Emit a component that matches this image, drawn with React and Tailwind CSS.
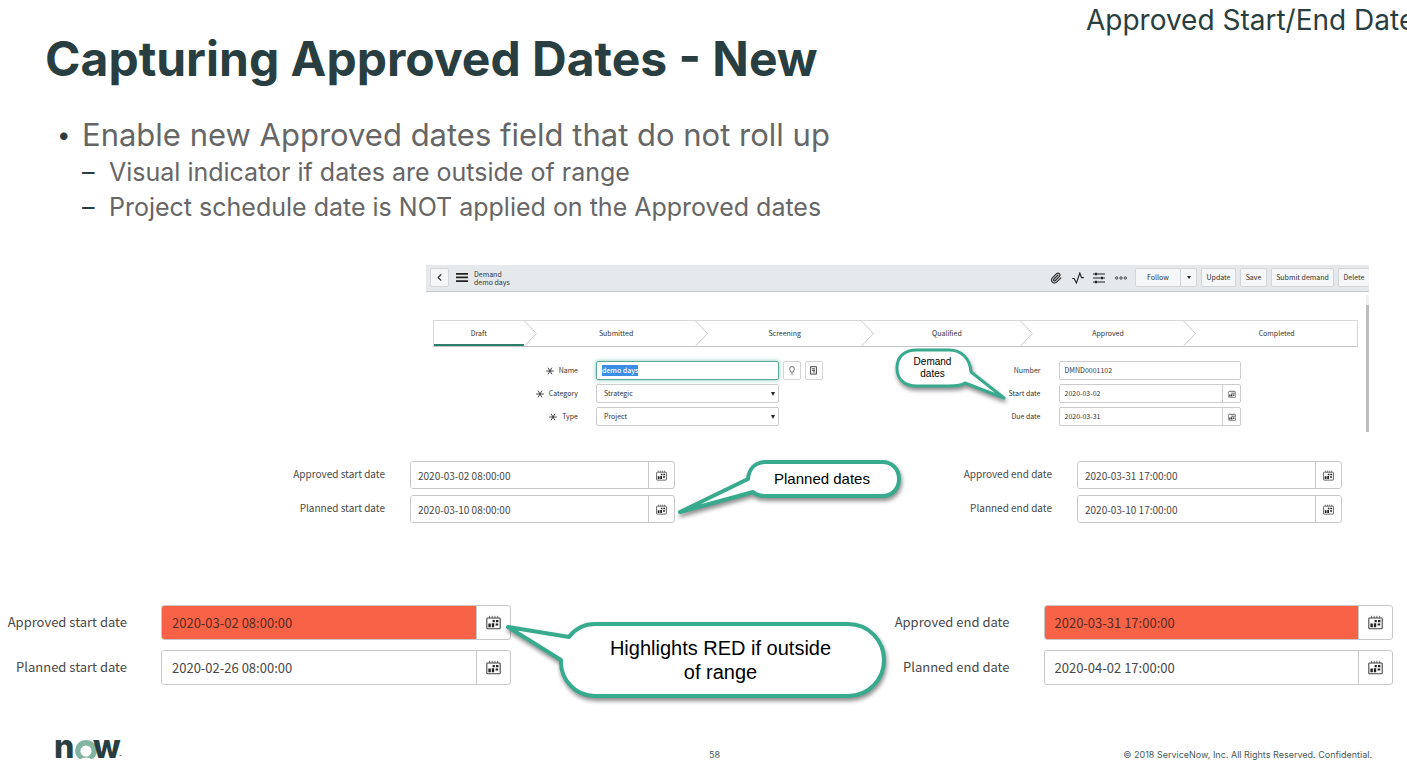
import React, { useEffect, useRef } from 'react';
import { ChevronLeft, Paperclip } from 'lucide-react';

const steps = [
  { name: 'Draft', grow: 'flex-[103]', active: true },
  { name: 'Submitted', grow: 'flex-[172]' },
  { name: 'Screening', grow: 'flex-[166]' },
  { name: 'Qualified', grow: 'flex-[159]' },
  { name: 'Approved', grow: 'flex-[164]' },
  { name: 'Completed', grow: 'flex-[161]' },
];

const CalendarIcon = ({ className }) => (
  <svg viewBox="0 0 15 15" className={className} fill="none" stroke="#444" aria-hidden="true">
    <rect x="0.8" y="3" width="13.4" height="10.8" rx="0.8" strokeWidth="1.1" />
    <path d="M3.5 0.8v2.4M6.2 0.8v2.4M8.9 0.8v2.4M11.6 0.8v2.4" strokeWidth="0.8" />
    <path
      d="M2.400 8.600h2.400v3.600H2.400zM5.800 8.200h2.400v4H5.800zM6.600 5h2.200v2.200H6.600zM10 5h2.400v2.200H10zM9.600 8.400h2.600v2.200H9.600z"
      fill="#222"
      stroke="none"
    />
  </svg>
);

// Speech bubble, the tail is part of the outline
const Callout = ({ path, viewBox, stroke, className, textClass, children }) => (
  <div className={`absolute z-10 ${className}`}>
    <svg viewBox={viewBox} className="absolute inset-0 w-full h-full overflow-visible" aria-hidden="true">
      <path
        d={path}
        fill="#fff"
        stroke="#38ab8e"
        strokeWidth={stroke}
        strokeLinejoin="round"
        className="drop-shadow-[1px_3px_2px_rgba(0,0,0,0.45)]"
      />
    </svg>
    <div className={`absolute flex items-center justify-center text-center text-black font-['Liberation_Sans',Arial,sans-serif] ${textClass}`}>
      {children}
    </div>
  </div>
);

// Form row inside the demand record
const RecordRow = ({ id, label, required, children }) => (
  <div className="flex h-[19px]">
    <label htmlFor={id} className="w-[145px] mr-[18px] flex items-center justify-end gap-[5px]">
      {required && (
        <svg viewBox="0 0 8 8" className="w-2 h-2" stroke="#333" strokeWidth="0.9" aria-hidden="true">
          <path d="M0.200 4h7.600M2.100 0.700l3.800 6.600M5.900 0.700L2.100 7.300" />
        </svg>
      )}
      {label}
    </label>
    <div className="flex-1 flex">{children}</div>
    <div className="w-[117px]" />
  </div>
);

const RecordSelect = ({ id, value }) => (
  <div className="relative flex-1">
    <select id={id} className="w-full h-full appearance-none border border-[#ccc] rounded-xs pl-[7px] bg-white">
      <option>{value}</option>
    </select>
    <svg viewBox="0 0 4 4" className="absolute right-1 top-2 w-1 h-1 pointer-events-none" aria-hidden="true">
      <path d="M0 0h4L2 4z" fill="#222" />
    </svg>
  </div>
);

const RecordDate = ({ id, value }) => (
  <div className="flex flex-1 border border-[#ccc] rounded-xs">
    <input id={id} defaultValue={value} className="flex-1 min-w-0 pl-[5px]" />
    <button aria-label="Pick date" className="w-[18px] border-l border-[#ccc] flex items-center justify-center">
      <CalendarIcon className="w-2 h-2" />
    </button>
  </div>
);

// Date-time row, small in the middle block and "lg" in the lower one
const DateTimeRow = ({ id, label, value, size, alert }) => {
  const lg = size === 'lg';
  return (
    <div className={`flex ${lg ? 'h-[35px] text-[13px]' : 'h-7 text-[10px]'}`}>
      <label
        htmlFor={id}
        className={`text-right whitespace-nowrap ${lg ? 'w-[127px] mr-[34px] leading-[34px]' : 'w-[377px] mr-[25px] leading-[26px]'}`}
      >
        {label}
      </label>
      <div className="flex flex-1 border border-[#c8c8c8] rounded-[3px] overflow-hidden">
        <input
          id={id}
          defaultValue={value}
          className={`flex-1 min-w-0 ${lg ? 'pl-[10px]' : 'pl-[7px]'} ${alert ? 'bg-[#f86348] text-[#5a2a22]' : 'bg-white'}`}
        />
        <button
          aria-label={`Pick ${label}`}
          className={`border-l border-[#c8c8c8] flex items-center justify-center ${lg ? 'w-[34px]' : 'w-[26px]'}`}
        >
          <CalendarIcon className={lg ? 'w-[15px] h-[15px]' : 'w-[11px] h-[11px]'} />
        </button>
      </div>
    </div>
  );
};

const HeaderButton = ({ className, children }) => (
  <button className={`h-[19px] bg-[#f4f6f7] border border-[#d3d6d8] rounded-xs whitespace-nowrap ${className}`}>
    {children}
  </button>
);

const DemandRecord = () => {
  const nameRef = useRef(null);

  useEffect(() => {
    nameRef.current.focus();
    nameRef.current.select();
  }, []);

  return (
    <section className="ml-[426px] mr-[38px] mt-10 h-[167px] relative text-[7px] text-[#333]">
      <header className="h-[27px] pb-px bg-[#e6e9eb] border-b border-[#c6c9cb] flex items-center pl-1 overflow-hidden">
        <HeaderButton className="w-[19px] flex items-center justify-center">
          <ChevronLeft className="w-[11px] h-[11px]" strokeWidth={2.5} />
        </HeaderButton>
        <svg viewBox="0 0 12 9" className="w-3 h-[9px] ml-[7px] mr-[6px]" fill="#222" aria-hidden="true">
          <path d="M0 0h12v1.7H0zM0 3.6h12v1.7H0zM0 7.2h12v1.7H0z" />
        </svg>
        <div className="leading-[8px]">
          <div>Demand</div>
          <div>demo days</div>
        </div>
        <div className="ml-auto flex items-center">
          <Paperclip className="w-3 h-3 mr-[10px]" color="#333" strokeWidth={2.5} />
          <svg viewBox="0 0 12 12" className="w-3 h-3 mr-[9px]" fill="none" stroke="#222" strokeWidth="1.1" aria-hidden="true">
            <path d="M0.3 6.5h1.8L4.4 11 7.8 1l1.7 4.6h2.3" />
          </svg>
          <svg viewBox="0 0 12 12" className="w-3 h-3 mr-[10px]" stroke="#222" strokeWidth="1.1" fill="#222" aria-hidden="true">
            <path d="M0 2h12M0 6h12M0 10h12" />
            <path d="M3 0.8v2.4M9 4.8v2.4M3 8.8v2.4" strokeWidth="2" />
          </svg>
          <svg viewBox="0 0 12 4" className="w-3 h-1 mr-2" fill="none" stroke="#333" strokeWidth="0.9" aria-hidden="true">
            <circle cx="1.7" cy="2" r="1.2" />
            <circle cx="6" cy="2" r="1.2" />
            <circle cx="10.3" cy="2" r="1.2" />
          </svg>
          <HeaderButton className="w-[46px]">Follow</HeaderButton>
          <HeaderButton className="w-[17px] -ml-px mr-1 flex items-center justify-center">
            <svg viewBox="0 0 4 3" className="w-1 h-[3px]" aria-label="More"><path d="M0 0h4L2 3z" fill="#222" /></svg>
          </HeaderButton>
          <HeaderButton className="w-[35px] mr-1">Update</HeaderButton>
          <HeaderButton className="w-[27px] mr-1">Save</HeaderButton>
          <HeaderButton className="w-[63px] mr-1">Submit demand</HeaderButton>
          <HeaderButton className="w-[31px] border-r-0">Delete</HeaderButton>
        </div>
      </header>

      {/* Scrollbar */}
      <div className="absolute right-0 top-[30px] bottom-0 w-[3px] bg-[#f1f1f1] pt-[10px]">
        <div className="h-full bg-[#bdbdbd]" />
      </div>

      <ol className="mt-7 ml-[7px] mr-[11px] h-[27px] flex border border-[#d8d8d8] border-b-[#c4c4c4]">
        {steps.map((step, index) => (
          <li key={step.name} className={`flex ${step.grow}`}>
            <span
              className={`flex-1 flex items-center justify-center ${
                step.active ? 'border-b-2 border-[#2d7f6c] pt-0.5' : ''
              }`}
            >
              {step.name}
            </span>
            {index < steps.length - 1 && (
              <svg viewBox="0 0 13 25" className="w-[13px] h-[25px]" fill="none" stroke="#ccc" aria-hidden="true">
                <path d="M0.5 0L12.5 12.5L0.5 25" />
              </svg>
            )}
          </li>
        ))}
      </ol>

      <div className="mt-[14px] ml-[7px] mr-[11px] grid grid-cols-2">
        <div className="flex flex-col gap-1">
          <RecordRow id="name" label="Name" required>
            <div className="relative flex-1 flex">
              <input
                ref={nameRef}
                id="name"
                defaultValue="demo days"
                className="flex-1 min-w-0 border border-[#5aa899] rounded-xs pl-[5px] outline-none font-medium shadow-[0_0_4px_#7cc4b6] selection:bg-[#3b8ee8] selection:text-white"
              />
              <div className="absolute left-full ml-1 h-full flex gap-1">
                <button aria-label="Suggestion" className="w-[18px] border border-[#d4d4d4] rounded-xs flex items-center justify-center">
                  <svg viewBox="0 0 6 9" className="w-[6px] h-[9px]" fill="none" stroke="#444" strokeWidth="0.8">
                    <path d="M2 6.2C2 5 0.6 4.4 0.6 2.9a2.4 2.4 0 0 1 4.8 0C5.4 4.4 4 5 4 6.2zM2.2 8h1.6" />
                  </svg>
                </button>
                <button aria-label="Search knowledge" className="w-[18px] border border-[#d4d4d4] rounded-xs flex items-center justify-center">
                  <svg viewBox="0 0 7 9" className="w-[7px] h-[9px]" fill="none" stroke="#333" strokeWidth="0.9">
                    <path d="M0.6 0.7h5.8v7.4H0.6zM2 2.8h3M2 4.4h3M3 6h2" />
                  </svg>
                </button>
              </div>
            </div>
          </RecordRow>
          <RecordRow id="category" label="Category" required>
            <RecordSelect id="category" value="Strategic" />
          </RecordRow>
          <RecordRow id="type" label="Type" required>
            <RecordSelect id="type" value="Project" />
          </RecordRow>
        </div>

        <div className="flex flex-col gap-1 relative">
          <RecordRow id="number" label="Number">
            <input id="number" defaultValue="DMND0001102" className="flex-1 min-w-0 border border-[#ccc] rounded-xs pl-[5px]" />
          </RecordRow>
          <RecordRow id="start" label="Start date">
            <RecordDate id="start" value="2020-03-02" />
          </RecordRow>
          <RecordRow id="due" label="Due date">
            <RecordDate id="due" value="2020-03-31" />
          </RecordRow>
          <Callout
            className="-left-px -top-[13px] w-[112px] h-[52px]"
            viewBox="0 0 112 52"
            stroke="3"
            path="M22 2H54C66 2 75 10 76 24L109 50L70 35C66 38 61 38 54 38H22C9 38 2 31 2 20S9 2 22 2Z"
            textClass="left-0 top-0 w-[76px] h-10 text-[10px] leading-3"
          >
            Demand<br />dates
          </Callout>
        </div>
      </div>
    </section>
  );
};

const App = () => {
  return (
    <main className="w-full bg-white overflow-hidden text-[#484848] font-['Noto_Sans_CJK_SC','Noto_Sans',sans-serif]">
      <div className="font-['Century_Gothic',Inter,sans-serif]">
        <p className="ml-[1086px] h-10 leading-10 text-[28px] text-[#293e40] whitespace-nowrap overflow-hidden">
          Approved Start/End Date
        </p>
        <h1 className="pl-[45px] leading-[38px] text-[48px] font-bold text-[#293e40]">
          Capturing Approved Dates - New
        </h1>
        <ul className="mt-[37px] pl-[56px] text-[#666]">
          <li className="flex items-center leading-10 text-[31px]">
            <span className="w-[26px] pl-px text-[24px] text-[#293e40]">•</span>
            Enable new Approved dates field that do not roll up
          </li>
          <li className="flex leading-[35px] text-[25px] pl-[26px]">
            <span className="w-[27px] text-[#293e40]">–</span>
            Visual indicator if dates are outside of range
          </li>
          <li className="flex leading-[35px] text-[25px] pl-[26px]">
            <span className="w-[27px] text-[#293e40]">–</span>
            Project schedule date is NOT applied on the Approved dates
          </li>
        </ul>
      </div>

      <DemandRecord />

      {/* Dates inside of the range */}
      <section className="mt-[29px] pl-2 pr-[65px] grid grid-cols-2">
        <div className="relative flex flex-col gap-[6px]">
          <DateTimeRow id="asd1" label="Approved start date" value="2020-03-02 08:00:00" />
          <DateTimeRow id="psd1" label="Planned start date" value="2020-03-10 08:00:00" />
          <Callout
            className="left-full ml-[2px] -top-[1px] w-[224px] h-[55px]"
            viewBox="0 0 224 55"
            stroke="4"
            path="M89 2H205C216 2 222 10 222 19S216 36 205 36H89C83 36 79 35 76 32L3 52L71 19C72 8 79 2 89 2Z"
            textClass="left-[71px] top-0 w-[148px] h-[38px] text-[15px]"
          >
            Planned dates
          </Callout>
        </div>
        <div className="flex flex-col gap-[6px]">
          <DateTimeRow id="aed1" label="Approved end date" value="2020-03-31 17:00:00" />
          <DateTimeRow id="ped1" label="Planned end date" value="2020-03-10 17:00:00" />
        </div>
      </section>

      {/* Dates outside of the range */}
      <section className="mt-[82px] pr-[14px] grid grid-cols-2 gap-x-[372px]">
        <div className="relative flex flex-col gap-[10px]">
          <DateTimeRow size="lg" alert id="asd2" label="Approved start date" value="2020-03-02 08:00:00" />
          <DateTimeRow size="lg" id="psd2" label="Planned start date" value="2020-02-26 08:00:00" />
          <Callout
            className="left-full -ml-[5px] top-[17px] w-[380px] h-[78px]"
            viewBox="0 0 380 78"
            stroke="4"
            path="M89 2H342C363 2 378 19 378 38S363 74 342 74H89C69 74 54 57 55 38L2 5L63 15C69 7 77 2 89 2Z"
            textClass="left-[54px] top-0 w-[322px] h-[76px] text-[20px] leading-6"
          >
            Highlights RED if outside<br />of range
          </Callout>
        </div>
        <div className="flex flex-col gap-[10px]">
          <DateTimeRow size="lg" alert id="aed2" label="Approved end date" value="2020-03-31 17:00:00" />
          <DateTimeRow size="lg" id="ped2" label="Planned end date" value="2020-04-02 17:00:00" />
        </div>
      </section>

      <footer className="mt-[54px] mb-2 pl-[55px] pr-[35px] h-6 grid grid-cols-3 items-end text-[9px] leading-4 text-[#4a5a5c] font-['Century_Gothic',Inter,sans-serif]">
        <svg viewBox="0 0 70 24" className="w-[70px] h-6 overflow-visible" role="img" aria-label="now">
          <path
            d="M31 1A11 10.800 0 0 0 23.600 19.600Q25.500 20.600 27.500 19.300Q31 17.500 34.500 19.300Q36.500 20.600 38.400 19.600A11 10.800 0 0 0 31 1ZM31 6.400A5.600 5.600 0 1 1 31 17.600A5.600 5.600 0 1 1 31 6.400Z"
            fill="#81b5a1"
            fillRule="evenodd"
          />
          <g fill="#293e40" fontFamily="Inter, sans-serif" fontWeight="800">
            <text x="-1" y="19" fontSize="32">n</text>
            <text x="38" y="19" fontSize="32">w</text>
            <text x="64" y="19" fontSize="4">™</text>
          </g>
        </svg>
        <span className="text-center pl-0.5">58</span>
        <span className="text-right whitespace-nowrap">© 2018 ServiceNow, Inc. All Rights Reserved. Confidential.</span>
      </footer>
    </main>
  );
};

export default App;
